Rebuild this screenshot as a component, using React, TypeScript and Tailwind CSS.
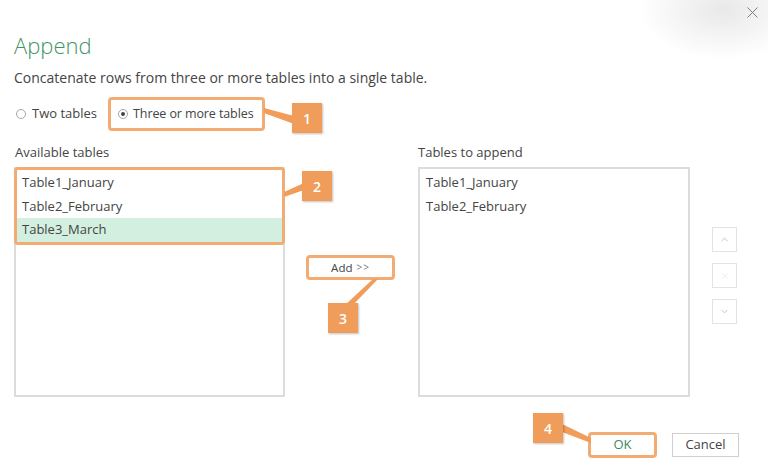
import { ChevronUp, ChevronDown, X } from "lucide-react";

const font = { fontFamily: '"Open Sans", "Noto Sans", sans-serif' };

// orange numbered tag used in the tutorial annotations
const Badge = ({ n, className }: { n: number; className: string }) => (
  <div
    className={`absolute w-[30px] h-[30px] bg-[#f09d5b] text-white text-[14px] font-semibold flex items-center justify-center shadow-[1px_1px_2px_rgba(0,0,0,0.25)] ${className}`}
  >
    {n}
  </div>
);

const Radio = ({ checked }: { checked?: boolean }) => (
  <span className="shrink-0 w-[10px] h-[10px] rounded-full border border-[#a8a8a8] bg-white flex items-center justify-center">
    {checked && <span className="w-[4px] h-[4px] rounded-full bg-[#444]" />}
  </span>
);

const SideButton = ({ children }: { children?: React.ReactNode }) => (
  <div className="w-[25px] h-[25px] border border-[#e3e3e3] flex items-center justify-center text-[#bdbdbd]">
    {children}
  </div>
);

export default function App() {
  return (
    <div
      className="relative w-[768px] h-[468px] bg-white overflow-hidden text-[#444] pl-[14px]"
      style={font}
    >
      {/* shadow in top right corner */}
      <div className="absolute -top-[40px] -right-[40px] w-[170px] h-[100px] bg-[radial-gradient(ellipse_at_center,rgba(0,0,0,0.09),rgba(0,0,0,0)_70%)]" />
      <X className="absolute top-[3px] right-[6px] text-[#6f6f6f]" size={19} strokeWidth={1.1} />

      <h1 className="pt-[30px] text-[22px] leading-[30px] font-light text-[#3f9468]">Append</h1>
      <p className="mt-[8px] text-[14px] leading-[20px]">
        Concatenate rows from three or more tables into a single table.
      </p>

      <div className="mt-[9px] flex items-center h-[34px] text-[13px] whitespace-nowrap">
        <label className="flex items-center gap-[6px] pl-[2px]">
          <Radio />
          Two tables
        </label>
        <label className="ml-[11px] h-[34px] w-[157px] flex items-center gap-[5px] pl-[7px] border-[3px] border-[#f2ac73] rounded-[4px] text-[12.5px] tracking-[-0.1px]">
          <Radio checked />
          Three or more tables
        </label>
      </div>

      <div className="mt-[11px] flex text-[13px] leading-[20px]">
        <div className="w-[404px] pl-[1px]">Available tables</div>
        <div>Tables to append</div>
      </div>

      <div className="mt-[5px] flex items-start text-[13px]">
        <div className="w-[271px] h-[230px] border-2 border-[#dcdcdc]">
          <div className="-m-[2px] border-[3px] border-[#f2ac73] rounded-[4px] pt-[1px]">
            {["Table1_January", "Table2_February", "Table3_March"].map((t, i) => (
              <div
                key={t}
                className={`h-[23.5px] flex items-center pl-[5px] ${i === 2 ? "bg-[#d3efe0]" : ""}`}
              >
                {t}
              </div>
            ))}
          </div>
        </div>

        <div className="w-[133px] flex justify-center pt-[88px]">
          <button className="w-[89px] h-[25px] border-[3px] border-[#f2ac73] rounded-[4px] text-[11.5px] flex items-center justify-center -ml-[2px]">
            Add <span className="ml-[4px] text-[10px] tracking-[1px] text-[#777]">&gt;&gt;</span>
          </button>
        </div>

        <div className="w-[272px] h-[230px] border-2 border-[#dcdcdc] pt-[2px]">
          {["Table1_January", "Table2_February"].map((t) => (
            <div key={t} className="h-[24px] flex items-center pl-[6px]">
              {t}
            </div>
          ))}
        </div>

        <div className="ml-[22px] pt-[60px] flex flex-col gap-[11px]">
          <SideButton>
            <ChevronUp size={11} strokeWidth={2} />
          </SideButton>
          <SideButton>
            <X size={10} strokeWidth={1.5} className="text-[#e8e8e8]" />
          </SideButton>
          <SideButton>
            <ChevronDown size={11} strokeWidth={2} />
          </SideButton>
        </div>
      </div>

      <div className="mt-[35px] flex items-center justify-end pr-[29px] gap-[15px] text-[13px]">
        <button className="w-[69px] h-[26px] border-[3px] border-[#f2ac73] rounded-[4px] text-[#3a8a5f]">
          OK
        </button>
        <button className="w-[67px] h-[24px] border border-[#cfcfcf]">Cancel</button>
      </div>

      {/* annotation callouts */}
      <svg className="absolute inset-0 pointer-events-none" width="768" height="468">
        <g fill="#f09d5b">
          <polygon points="264,108 264,113 294,124 294,116" />
          <polygon points="284,192 284,197 304,190 304,183" />
          <polygon points="373,279 378,279 352,306 344,306" />
          <polygon points="562,424 562,432 591,443 591,438" />
        </g>
      </svg>
      <Badge n={1} className="left-[292px] top-[103px]" />
      <Badge n={2} className="left-[302px] top-[171px]" />
      <Badge n={3} className="left-[328px] top-[303px]" />
      <Badge n={4} className="left-[533px] top-[413px]" />
    </div>
  );
}
